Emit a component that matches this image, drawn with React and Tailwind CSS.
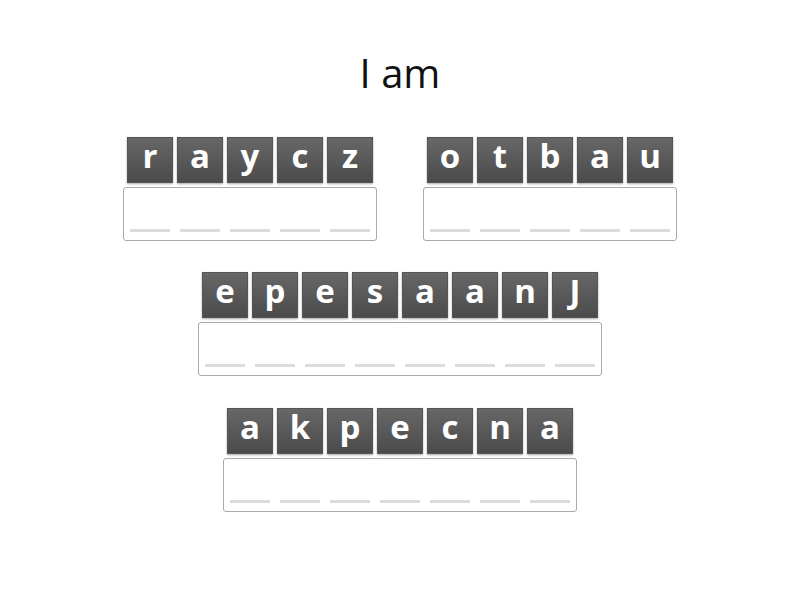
const words = [
  ['r', 'a', 'y', 'c', 'z'],
  ['o', 't', 'b', 'a', 'u'],
  ['e', 'p', 'e', 's', 'a', 'a', 'n', 'J'],
  ['a', 'k', 'p', 'e', 'c', 'n', 'a'],
];

function Word({ letters }) {
  return (
    <div className="flex flex-col items-center">
      <div className="flex gap-[4px]">
        {letters.map((l, i) => (
          <div
            key={i}
            className="w-[46px] h-[46px] bg-gradient-to-b from-[#676767] to-[#4b4b4b] border border-[#555] shadow-[0_1px_2px_rgba(0,0,0,0.35)] text-white text-[33px] font-bold leading-[36px] text-center"
          >
            {l}
          </div>
        ))}
      </div>
      <div
        className="mt-[4px] h-[54px] border border-[#a9a9a9] rounded-[3px] flex items-end justify-center gap-[10px] pb-[8px]"
        style={{ width: letters.length * 50 + 4 }}
      >
        {letters.map((_, i) => (
          <div key={i} className="w-[40px] h-[3px] bg-[#dcdcdc]" />
        ))}
      </div>
    </div>
  );
}

export default function App() {
  return (
    <div
      className="w-[800px] h-[600px] bg-white flex flex-col items-center"
      style={{ fontFamily: '"Open Sans", sans-serif' }}
    >
      <h1 className="mt-[45px] text-[40px] leading-[56px] text-[#111] font-normal">I am</h1>
      <div className="mt-[36px] flex gap-[46px]">
        <Word letters={words[0]} />
        <Word letters={words[1]} />
      </div>
      <div className="mt-[31px]">
        <Word letters={words[2]} />
      </div>
      <div className="mt-[32px]">
        <Word letters={words[3]} />
      </div>
    </div>
  );
}
